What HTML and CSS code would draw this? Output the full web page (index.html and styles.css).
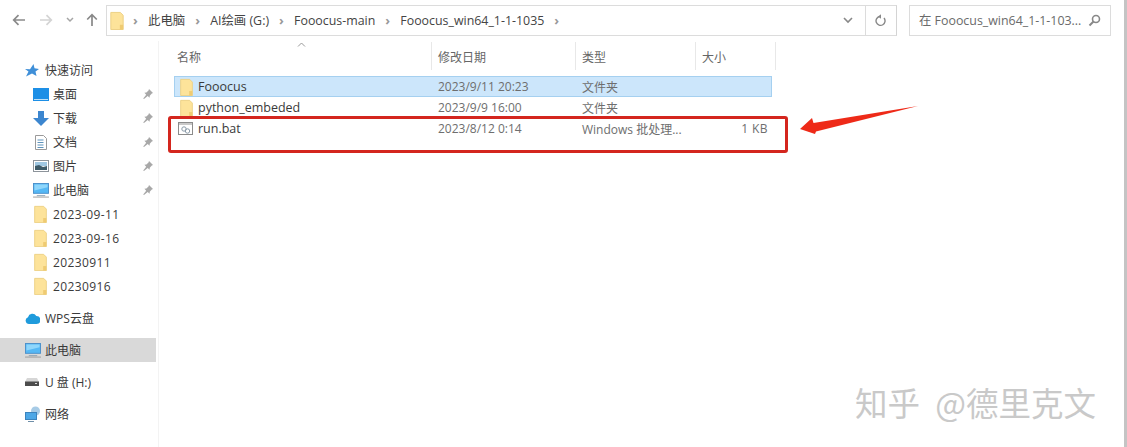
FILE: index.html
```html
<!DOCTYPE html>
<html lang="zh-CN">
<head>
<meta charset="utf-8">
<title>Fooocus_win64_1-1-1035</title>
<link rel="stylesheet" href="styles.css">
</head>
<body>
<svg class="defs" width="0" height="0" aria-hidden="true">
  <symbol id="folder" viewBox="0 0 14 20">
    <path d="M.5 1.500h10l3 3v15H.5z" fill="#fde39a" stroke="#ecd083"/>
    <path d="M10 19.500v-5h3.500v5z" fill="#efcb72"/>
  </symbol>
  <symbol id="pin" viewBox="0 0 12 12">
    <path d="M7 1l4 4-1.200.6-2 2.200-.3 2L5.700 8 2 11l-.8-.6 3-3.700L2.400 4.800l2-.3 2.100-2z" fill="#a8a8a8"/>
  </symbol>
  <symbol id="pc" viewBox="0 0 17 16">
    <rect x=".5" y=".5" width="16" height="10.500" fill="#55b8f5" stroke="#4a8fc9"/>
    <path d="M1.500 1.500h14v3L1.500 8z" fill="#8fd6fb"/>
    <path d="M4 13.500h9" stroke="#8aa0b2"/>
    <path d="M0 15h17" stroke="#9a9a9a"/>
  </symbol>
</svg>

<main class="window">
  <header class="toolbar">
    <div class="nav-buttons">
      <svg class="nav-icon" width="14" height="12" viewBox="0 0 14 12"><path d="M13 6H2M6.500 1.200 1.700 6l4.800 4.800" fill="none" stroke="#8a8a8a" stroke-width="1.700"/></svg>
      <svg class="nav-icon" width="14" height="12" viewBox="0 0 14 12"><path d="M1 6h11M7.500 1.200 12.300 6l-4.800 4.800" fill="none" stroke="#d4d4d4" stroke-width="1.700"/></svg>
      <svg class="nav-icon small" width="8" height="6" viewBox="0 0 8 6"><path d="M1 1l3 3 3-3" fill="none" stroke="#a5a5a5" stroke-width="1.500"/></svg>
      <svg class="nav-icon" width="12" height="14" viewBox="0 0 12 14"><path d="M6 13V2M1.200 6.500 6 1.700l4.800 4.800" fill="none" stroke="#888" stroke-width="1.700"/></svg>
    </div>
    <div class="address">
      <svg class="crumb-folder" width="14" height="19"><use href="#folder"/></svg>
      <nav class="crumbs">
        <span class="sep">›</span><span>此电脑</span>
        <span class="sep">›</span><span>AI绘画 (G:)</span>
        <span class="sep">›</span><span>Fooocus-main</span>
        <span class="sep">›</span><span>Fooocus_win64_1-1-1035</span>
        <span class="sep">›</span>
      </nav>
      <svg class="chevron" width="10" height="7" viewBox="0 0 10 7"><path d="M1 1l4 4 4-4" fill="none" stroke="#888" stroke-width="1.600"/></svg>
      <div class="refresh">
        <svg width="12" height="13" viewBox="0 0 12 13"><path d="M4.500 2.500A4.500 4.500 0 1 0 9 4" fill="none" stroke="#888" stroke-width="1.400"/><path d="M4 .2v4.500L7 2.500z" fill="#888" transform="rotate(180 5 2.500)"/></svg>
      </div>
    </div>
    <div class="search">
      <span class="search-text">在 Fooocus_win64_1-1-103...</span>
      <svg width="13" height="13" viewBox="0 0 13 13"><circle cx="8" cy="5" r="3.500" fill="none" stroke="#888" stroke-width="1.600"/><path d="M5.500 7.500 1.500 11.500" stroke="#888" stroke-width="2"/></svg>
    </div>
  </header>

  <div class="content">
    <aside class="sidebar">
      <ul class="nav-group">
        <li class="nav-item head">
          <svg class="ico" width="14" height="13" viewBox="0 0 14 13"><path d="M8.500 0l1 4.300L14 5l-3.500 2.600L11.500 12 7 9.500 1 12.500l2.500-5L0 5l5 .2z" fill="#3f8fd8"/></svg>
          <span>快速访问</span>
        </li>
        <li class="nav-item sub">
          <svg class="ico" width="16" height="13" viewBox="0 0 16 13"><rect width="16" height="13" fill="#1d8fe6"/><path d="M1 11.500h14" stroke="#bfe0f7"/></svg>
          <span>桌面</span><svg class="pin" width="12" height="12"><use href="#pin"/></svg>
        </li>
        <li class="nav-item sub">
          <svg class="ico" width="16" height="15" viewBox="0 0 16 15"><path d="M5 0h6v7h5l-8 8-8-8h5z" fill="#3c86cf"/></svg>
          <span>下载</span><svg class="pin" width="12" height="12"><use href="#pin"/></svg>
        </li>
        <li class="nav-item sub">
          <svg class="ico" width="16" height="15" viewBox="0 0 16 15"><path d="M2.500.500h8l3 3v11h-11z" fill="#fff" stroke="#9a9a9a"/><path d="M4.500 5h6M4.500 7.500h6M4.500 10h6M4.500 12.500h6" stroke="#5f93bb"/></svg>
          <span>文档</span><svg class="pin" width="12" height="12"><use href="#pin"/></svg>
        </li>
        <li class="nav-item sub">
          <svg class="ico" width="16" height="12" viewBox="0 0 16 12"><rect x=".5" y=".5" width="15" height="11" fill="#fff" stroke="#8d949b"/><rect x="2" y="2" width="12" height="4" fill="#9fc7e2"/><path d="M2 10V6l4-1 4 2 4-1v4z" fill="#3d5a68"/></svg>
          <span>图片</span><svg class="pin" width="12" height="12"><use href="#pin"/></svg>
        </li>
        <li class="nav-item sub">
          <svg class="ico" width="16" height="15"><use href="#pc"/></svg>
          <span>此电脑</span><svg class="pin" width="12" height="12"><use href="#pin"/></svg>
        </li>
        <li class="nav-item sub num"><svg class="ico" width="13" height="18"><use href="#folder"/></svg><span>2023-09-11</span></li>
        <li class="nav-item sub num"><svg class="ico" width="13" height="18"><use href="#folder"/></svg><span>2023-09-16</span></li>
        <li class="nav-item sub num"><svg class="ico" width="13" height="18"><use href="#folder"/></svg><span>20230911</span></li>
        <li class="nav-item sub num"><svg class="ico" width="13" height="18"><use href="#folder"/></svg><span>20230916</span></li>
      </ul>
      <ul class="nav-group">
        <li class="nav-item head">
          <svg class="ico" width="15" height="11" viewBox="0 0 15 11"><path d="M4 11a3.500 3.500 0 0 1-1-6.800A4.500 4.500 0 0 1 11.300 3 4 4 0 0 1 11.500 11z" fill="#1f9bdc"/></svg>
          <span>WPS云盘</span>
        </li>
      </ul>
      <ul class="nav-group">
        <li class="nav-item head active">
          <svg class="ico" width="16" height="15"><use href="#pc"/></svg>
          <span>此电脑</span>
        </li>
      </ul>
      <ul class="nav-group">
        <li class="nav-item head">
          <svg class="ico" width="14" height="8" viewBox="0 0 14 8"><path d="M2 0h10l2 4v4H0V4z" fill="#d6d6d6"/><rect y="3.500" width="14" height="4.500" fill="#4c4c4c"/><path d="M10 5.500h2" stroke="#ddd"/></svg>
          <span>U 盘 (H:)</span>
        </li>
      </ul>
      <ul class="nav-group">
        <li class="nav-item head">
          <svg class="ico" width="16" height="16" viewBox="0 0 16 16"><circle cx="10.500" cy="5" r="4.500" fill="#a7cbe6"/><rect x=".5" y="6.500" width="11" height="7" fill="#4da7e6" stroke="#3b83bd"/><path d="M3 15.500h6" stroke="#6e8ea8"/></svg>
          <span>网络</span>
        </li>
      </ul>
    </aside>

    <section class="files">
      <svg class="sort" width="9" height="5" viewBox="0 0 9 5"><path d="M1 4.500 4.500 1 8 4.500" fill="none" stroke="#999"/></svg>
      <div class="grid head-row">
        <div class="first">名称</div><div>修改日期</div><div>类型</div><div>大小</div>
      </div>
      <div class="grid row selected">
        <div class="name"><svg width="13" height="18"><use href="#folder"/></svg>Fooocus</div>
        <div>2023/9/11 20:23</div><div>文件夹</div><div></div>
      </div>
      <div class="grid row">
        <div class="name"><svg width="13" height="18"><use href="#folder"/></svg>python_embeded</div>
        <div>2023/9/9 16:00</div><div>文件夹</div><div></div>
      </div>
      <div class="grid row">
        <div class="name bat">
          <svg width="15" height="13" viewBox="0 0 15 13"><rect x=".5" y=".5" width="14" height="12" fill="#fff" stroke="#8b8b8b"/><path d="M1 1h13v2H1z" fill="#c9c9c9"/><circle cx="6" cy="7" r="2.200" fill="none" stroke="#8a9aa8"/><circle cx="9.500" cy="9" r="2.200" fill="none" stroke="#8a9aa8"/></svg>run.bat
        </div>
        <div>2023/8/12 0:14</div><div>Windows 批处理...</div><div class="size">1 KB</div>
      </div>
    </section>
  </div>

  <div class="highlight"></div>
  <svg class="arrow" width="122" height="36" viewBox="0 0 122 36"><path d="M1 25 13 14 14.500 19 119 2 17 27.500 16 30z" fill="#ee2a18"/></svg>
  <div class="watermark">知乎 @德里克文</div>
</main>
</body>
</html>
```
FILE: styles.css
```css
* { box-sizing: border-box; }
html, body { margin: 0; height: 100%; background: #fff; }
body {
  overflow: hidden;
  font-family: "Open Sans", "Noto Sans CJK SC", sans-serif;
  font-size: 12px;
  color: #3f3f3f;
}
.defs { position: absolute; }
.window {
  position: relative;
  width: 1127px;
  height: 447px;
  border-right: 3px solid #c4c4c4;
  display: flex;
  flex-direction: column;
}
.toolbar {
  display: flex;
  align-items: center;
  height: 41px;
  padding-top: 5px;
  padding-bottom: 6px;
}
.nav-buttons {
  display: flex;
  align-items: center;
  width: 106px;
  padding-left: 12px;
  gap: 13px;
}
.nav-icon.small { margin-right: -1px; }
.address {
  width: 791px;
  height: 31px;
  border: 1px solid #dcdcdc;
  border-right-color: #d4d4d4;
  display: flex;
  align-items: center;
  padding-left: 3px;
}
.crumb-folder { flex: none; }
.crumbs {
  flex: 1;
  display: flex;
  align-items: center;
  margin-left: 9px;
  color: #444;
  font-size: 12.400px;
  white-space: nowrap;
}
.crumbs span:not(.sep) { margin: 0 10px 0 10px; }
.sep { color: #999; font-size: 13px; font-weight: 700; width: 5px; }
.chevron { margin-right: 12px; }
.refresh {
  width: 31px;
  height: 29px;
  border-left: 1px solid #dcdcdc;
  display: flex;
  align-items: center;
  justify-content: center;
}
.search {
  width: 202px;
  height: 31px;
  margin-left: 12px;
  border: 1px solid #dcdcdc;
  display: flex;
  align-items: center;
  justify-content: space-between;
  padding: 0 9px;
  color: #6a6a6a;
  font-size: 12.400px;
  white-space: nowrap;
}
.content { flex: 1; display: flex; min-height: 0; }
.sidebar {
  flex: none;
  width: 159px;
  border-right: 1px solid #f3f3f3;
  padding-top: 17px;
}
.nav-group { list-style: none; margin: 0 0 8px; padding: 0; }
.nav-item {
  height: 24px;
  width: 156px;
  display: flex;
  align-items: center;
  position: relative;
  white-space: nowrap;
  color: #3a3a3a;
}
.nav-item.head .ico { position: absolute; left: 25px; }
.nav-item.head span { margin-left: 45px; }
.nav-item.sub .ico { position: absolute; left: 33px; }
.nav-item.sub span { margin-left: 53px; }
.nav-item.num .ico { left: 34px; }
.nav-item.num span { letter-spacing: .4px; }
.nav-item.active { background: #d9d9d9; }
.pin { position: absolute; left: 142px; top: 6px; }
.files { flex: 1; position: relative; padding-left: 15px; }
.sort { position: absolute; left: 138px; top: 1px; }
.grid {
  display: grid;
  grid-template-columns: 258px 144px 120px 80px;
  width: 598px;
}
.head-row {
  width: 602px;
  height: 35px;
  padding-top: 1px;
  color: #666;
  align-items: start;
}
.head-row div {
  height: 28px;
  display: flex;
  align-items: center;
  padding: 2px 0 0 6px;
  border-right: 1px solid #e8e8e8;
}
.head-row .first { padding-left: 3px; }
.row { height: 21px; align-items: center; color: #6e6e6e; }
.row > div { padding-left: 6px; white-space: nowrap; }
.row > .name {
  display: flex;
  align-items: center;
  gap: 5px;
  color: #3a3a3a;
  padding-left: 6px;
  font-size: 12.500px;
}
.row > .bat { gap: 5px; padding-left: 4px; }
.selected { background: #cce6fb; outline: 1px solid #a5d0f0; outline-offset: -1px; }
.row > .size { text-align: right; padding: 0 8px 0 0; letter-spacing: .4px; }
.highlight {
  position: absolute;
  left: 168px;
  top: 116px;
  width: 620px;
  height: 37px;
  border: 3px solid #d4261e;
  border-radius: 3px;
}
.arrow { position: absolute; left: 799px; top: 104px; }
.watermark {
  position: absolute;
  left: 855px;
  top: 381px;
  font-family: "Noto Sans CJK SC", sans-serif;
  font-size: 32.500px;
  line-height: 42px;
  word-spacing: 8px;
  color: #c9c9c9;
  white-space: nowrap;
}
```
